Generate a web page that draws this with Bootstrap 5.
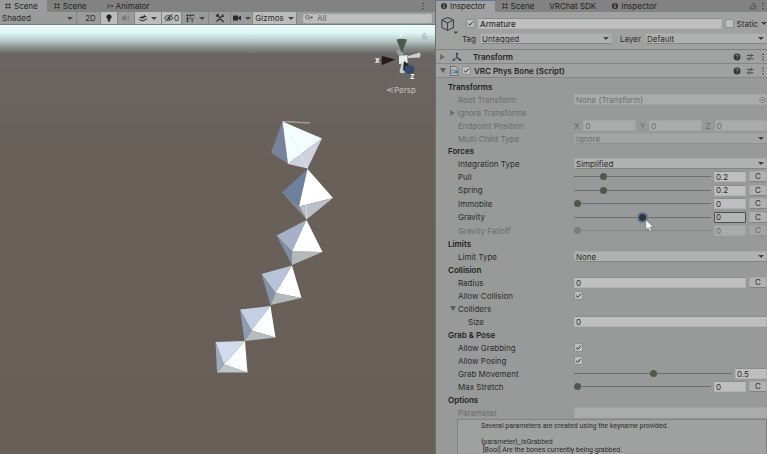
<!DOCTYPE html>
<html lang="en">
<head>
<meta charset="utf-8">
<meta name="viewport" content="width=device-width, initial-scale=1">
<title>Armature - Inspector</title>
<link href="https://cdn.jsdelivr.net/npm/bootstrap@5.3.0/dist/css/bootstrap.min.css" rel="stylesheet">
<style>
  body { font-family: Inter, "Liberation Sans", sans-serif; font-size: 8px; line-height: 12px; color: #2b2c2b; background: #989a99; }
  svg { display: block; flex: none; }
  button, input, select { font: inherit; color: inherit; }
  .editor { display: grid; grid-template-columns: 435fr 332fr; height: 100vh; }
  .pane { min-width: 0; min-height: 0; }
  .i8 { width: 8px; height: 8px; }
  .i10 { width: 10px; height: 10px; }
  .arrow { width: 0; height: 0; border: 3px solid transparent; border-top: 3px solid #444; border-bottom: 0; flex: none; }

  /* tab strips */
  .tabstrip { height: 12px; background: #828282; gap: 2px; }
  .tab { border: 0; background: none; padding: 0 9px 0 4px; gap: 2px; height: 12px; white-space: nowrap; color: #222; }
  .tab.current { background: #9a9c9b; }
  .inspector .tab.current { background: #a0a2a1; box-shadow: inset 0 1px #64799a; }

  /* scene toolbar */
  .toolstrip { height: 13px; background: #9a9b9b; border-bottom: 1px solid #7b7d7d; }
  .tool { border: 0; border-right: 1px solid #858686; background: none; padding: 0; height: 12px; gap: 4px; flex: none; }
  .tool.lit { background: #bbbcbc; }
  .w17 { width: 17px; } .w20 { width: 20px; } .w22 { width: 22px; } .w27 { width: 27px; } .w44 { width: 44px; }
  .shading { width: 77px; padding: 0 3px 0 2px; }
  .searchbox { height: 9px; margin: 0 3px 0 6px; padding: 0 2px; background: #bcbdbd; border-radius: 2px; }
  .searchbox input { background: none; border: 0; outline: 0; padding: 0; height: 9px; min-width: 0; width: 0; }
  .searchbox input::placeholder { color: #666; opacity: 1; }
  .viewport { background: #686059; }

  /* inspector */
  .inspector { border-left: 1px solid #6c6e6d; overflow: hidden; }
  .objhead { background: #a0a2a1; height: 38px; padding: 4px 0 0 5px; gap: 7px; border-bottom: 1px solid #7f8180; }
  .objhead .line { height: 15px; gap: 3px; }
  .objhead .tagline { margin-left: -4px; gap: 0; }
  .component { height: 14px; gap: 3px; background: #a0a2a1; border-bottom: 1px solid #858786; font-weight: 600; color: #252625; padding: 0 0 0 4px; }
  .component .tail { gap: 5px; }
  .box { background: #bebfbe; border: 1px solid #b1b3b2; border-top-color: #8b8d8c; border-radius: 1px; height: 11px; padding: 0 1px; min-width: 0; outline: 0; }
  .objname { font-weight: 500; }
  .pick { appearance: none; background: #b0b2b1 url("data:image/svg+xml,%3Csvg xmlns='http://www.w3.org/2000/svg' width='6' height='3'%3E%3Cpath d='M0 0h6L3 3z' fill='%23444'/%3E%3C/svg%3E") no-repeat right 2px center; border: 1px solid #a6a8a7; border-bottom-color: #838584; border-radius: 2px; height: 11px; padding: 0 1px; line-height: 8px; min-width: 0; }
  .tick { appearance: none; flex: none; width: 9px; height: 9px; margin: 0; background: #bdbebe; border: 1px solid #8d8f8e; border-radius: 1px; }
  .tick:checked { background-image: url("data:image/svg+xml,%3Csvg xmlns='http://www.w3.org/2000/svg' viewBox='0 0 7 7'%3E%3Cpath d='M1 3.6l1.8 1.7L6 1.6' fill='none' stroke='%23333' stroke-width='1'/%3E%3C/svg%3E"); }
  .slim { border: 1px solid #a7a9a8; border-bottom-color: #838584; background: #b0b2b1; width: 18px; height: 11px; line-height: 9px; padding: 0; border-radius: 2px; flex: none; margin-left: 3px; }
  .props { padding-top: 3px; }
  .prop { display: grid; grid-template-columns: 138px 1fr; align-items: center; height: 13px; }
  .prop > label, .prop > .lbl { padding-left: 22px; }
  .prop.tall { height: 14px; }
  .heading { font-size: 8px; font-weight: 600; height: 13px; line-height: 14px; margin: 0; padding-left: 12px; color: #1d1e1d; }
  .heading.tight { height: 12px; line-height: 12px; }
  .prop .fold { padding-left: 14px; gap: 2px; }
  .prop > label.deep { padding-left: 32px; }
  .off { color: #6a6c6b; }
  .off .box { background: #aaacab; border-color: #a3a5a4; }
  .off .pick, .off .slim { background-color: #a3a5a4; border-color: #9fa1a0; border-bottom-color: #909291; }
  .off input, .off select, .off button { color: #6a6c6b; opacity: 1; }
  .tri { border: 3px solid transparent; border-left: 5px solid #6b6d6c; border-right: 0; width: 0; height: 0; flex: none; }
  .tri.open { border: 3px solid transparent; border-top: 5px solid #5b5d5c; border-bottom: 0; }
  .num { width: 32px; flex: none; }
  .active-box { border-color: #4e504f; background: #b4b6b5; }
  .knob { appearance: none; background: none; height: 11px; margin: 0 3px 0 0; min-width: 0; width: 0; flex: 1; }
  .knob::-webkit-slider-runnable-track { height: 1px; background: #6d6f6e; }
  .knob::-webkit-slider-thumb { appearance: none; width: 7px; height: 7px; margin-top: -3px; border-radius: 50%; background: #4c5b49; }
  .off .knob::-webkit-slider-thumb { background: #7c7e7d; }
  .off .knob::-webkit-slider-runnable-track { background: #848685; }
  .knob.held::-webkit-slider-thumb { background: #303532; box-shadow: 0 0 0 2px #64789a; }
  .pointer { position: absolute; left: 71px; top: 7px; width: 9px; height: 13px; z-index: 2; }
  .help { margin-left: 21px; border: 1px solid #808281; background: #9fa1a0; font-family: Roboto, sans-serif; font-size: 7px; line-height: 8px; padding: 2px 0 8px 23px; white-space: pre-line; }
</style>
<script src="https://cdn.jsdelivr.net/npm/bootstrap@5.3.0/dist/js/bootstrap.bundle.min.js"></script>
</head>
<body class="overflow-hidden">
<svg width="0" height="0" class="position-absolute" aria-hidden="true">
  <symbol id="hash" viewBox="0 0 8 8"><path d="M2.5 1v6M5.5 1v6M1 2.5h6M1 5.5h6" stroke="#3c3c3c" stroke-width=".8" fill="none"/></symbol>
  <symbol id="info" viewBox="0 0 8 8"><circle cx="4" cy="4" r="3.1" fill="#333"/><path d="M4 1.8v1M4 3.5v2.7" stroke="#aaa" stroke-width="1"/></symbol>
  <symbol id="help" viewBox="0 0 8 8"><circle cx="4" cy="4" r="3.4" fill="#333"/><path d="M2.8 3.1c0-1.6 2.5-1.5 2.4 0C5.2 3.9 4 3.9 4 4.8M4 5.5v.9" stroke="#aaa" stroke-width=".8" fill="none"/></symbol>
  <symbol id="preset" viewBox="0 0 8 8"><path d="M1 2.5h3M5 2.5h2.5M5 .8v3.4M.8 5.8h2M4 5.8h3.4M3 4.2v3.3" stroke="#3a3a3a" stroke-width=".9" fill="none"/></symbol>
  <symbol id="dots" viewBox="0 0 8 8"><path d="M3.4.8h1.2V2H3.4zM3.4 3.4h1.2v1.2H3.4zM3.4 6h1.2v1.2H3.4z" fill="#3a3a3a"/></symbol>
  <symbol id="lock" viewBox="0 0 8 8"><path d="M1.500 4h5v3h-5zM3 2.500C3 .7 5.700.7 5.700 2.500V4" fill="none" stroke="#4b4b4b" stroke-width=".8"/></symbol>
</svg>

<main class="editor">
  <section class="pane d-flex flex-column" aria-label="Scene view">
    <div class="tabstrip d-flex align-items-center">
      <button class="tab current d-flex align-items-center"><svg class="i8"><use href="#hash"/></svg>Scene</button>
      <button class="tab d-flex align-items-center"><svg class="i8"><use href="#hash"/></svg>Scene</button>
      <button class="tab d-flex align-items-center ms-1"><svg class="i8" viewBox="0 0 8 8"><path d="M1 1.5L3 4 1 6.5M3 4h4M5.6 2.6L7 4 5.6 5.4" fill="none" stroke="#3c3c3c" stroke-width=".9"/></svg>Animator</button>
      <svg class="i8 ms-auto me-2"><use href="#dots"/></svg>
    </div>
    <div class="toolstrip d-flex align-items-center">
      <button class="tool shading d-flex align-items-center justify-content-between">Shaded<span class="arrow"></span></button>
      <button class="tool w20 ms-1">2D</button>
      <button class="tool lit w17 d-flex align-items-center justify-content-center" aria-label="Lighting"><svg class="i8" viewBox="0 0 8 8"><path d="M4 .5a2.400 2.400 0 0 0-1.200 4.600V7.500h2.400V5.100A2.400 2.400 0 0 0 4 .5" fill="#222"/></svg></button>
      <button class="tool w17 d-flex align-items-center justify-content-center" aria-label="Audio"><svg class="i8" viewBox="0 0 8 8"><path d="M0 3h1.500L3.500 1v6L1.500 5H0zM5 2.500v3M6.500 1.500v5" fill="#777" stroke="#777" stroke-width=".7"/></svg></button>
      <button class="tool lit w27 d-flex align-items-center justify-content-center" aria-label="Effects"><svg class="i8" viewBox="0 0 8 8"><path d="M0 3.500l3-1.300 1 .5L5.500.5 6 2l2 .5-2.500 1L4 4.700zM0 5l3.800 1.500L8 4.300v1L3.800 7.600 0 6z" fill="#2b2b2b"/></svg><span class="arrow"></span></button>
      <button class="tool lit w20 d-flex align-items-center justify-content-center gap-0"><svg class="i10" viewBox="0 0 10 10"><path d="M.5 5C2.500 1.800 7 1.800 9 5 7 8 2.500 8 .5 5zM1.500 8.500L8.500 1" fill="none" stroke="#333" stroke-width=".9"/><circle cx="5" cy="5" r="1.500" fill="#333"/></svg>0</button>
      <button class="tool w27 d-flex align-items-center justify-content-center" aria-label="Grid"><svg class="i10" viewBox="0 0 10 10"><path d="M2.500 1v8M5.500 1v3M8.500 1v2M1 2.500h8M1 5.500h4M1 8h3M5.500 4.500L7.200 7 9 4.500M7.200 7v2.500" fill="none" stroke="#333" stroke-width=".8"/></svg><span class="arrow"></span></button>
      <button class="tool w22 d-flex align-items-center justify-content-center" aria-label="Tools"><svg class="i10" viewBox="0 0 10 10"><path d="M1.500 1.500L8.500 9M8.500 1.500L1.500 8.500M.8 3.200h2.500V.8M6.500 3l2.500.5" fill="none" stroke="#303030" stroke-width="1.200"/></svg></button>
      <button class="tool w22 d-flex align-items-center justify-content-center" aria-label="Camera"><svg class="i8" viewBox="0 0 8 8"><path d="M0 1.500h5v5H0zM5.300 3.300L8 1.500v5L5.300 4.700z" fill="#2b2b2b"/></svg><span class="arrow"></span></button>
      <button class="tool lit w44 d-flex align-items-center justify-content-center">Gizmos<span class="arrow"></span></button>
      <label class="searchbox d-flex align-items-center flex-grow-1"><svg class="i8" viewBox="0 0 8 8"><circle cx="2.500" cy="3.200" r="1.800" fill="none" stroke="#555" stroke-width=".8"/><path d="M3.800 4.500L5.500 6.500M5.500 3h2.300L6.700 4.300z" stroke="#555" stroke-width=".6"/></svg><input class="flex-grow-1 ms-1" type="search" placeholder="All" aria-label="Search scene"></label>
    </div>
    <div class="viewport flex-grow-1 overflow-hidden pane">
      <svg class="w-100 h-100" viewBox="0 25 435 429" preserveAspectRatio="xMidYMin slice" role="img" aria-label="Chain of six bones">
        <defs>
          <linearGradient id="sky" x1="0" y1="0" x2="0" y2="1">
            <stop offset="0" stop-color="#ecfcfc"/><stop offset=".28" stop-color="#dcf5f4"/><stop offset=".55" stop-color="#b6c7c6"/><stop offset=".8" stop-color="#878b8a"/><stop offset="1" stop-color="#6b6766"/>
          </linearGradient>
          <linearGradient id="ground" x1="0" y1="0" x2="0" y2="1"><stop offset="0" stop-color="#6b6666"/><stop offset=".3" stop-color="#686059"/><stop offset="1" stop-color="#675f58"/></linearGradient>
        </defs>
        <path d="M0 25h435v429H0z" fill="url(#ground)"/>
        <path d="M0 25h435v29H0z" fill="url(#sky)"/>
        <g>
          <path d="M282.500 121.500L271 152.500 288 164z" fill="#77839a"/><path d="M282.500 121.500L322 138.500 288 164z" fill="#f3fcfe"/><path d="M322 138.500L307.500 168.500 288 164z" fill="#cdd2dc"/>
          <path d="M282.500 121.500L310 123.300M282.500 121.500L310 122.500" stroke="#b9bab8" stroke-width=".6"/><path d="M291 136L307.500 168.500" stroke="#d5eeea" stroke-width=".7"/>
          <path d="M307.500 169L282 192.500 299 206.500z" fill="#6c819c"/><path d="M307.500 169L333 198 299 206.500z" fill="#fff"/><path d="M299 206.500L333 198 306.500 219.500z" fill="#bcbfc7"/><path d="M282 192.500L299 206.500 306.500 219.500z" fill="#858b94"/><path d="M306.500 205v14" stroke="#e0e2e3" stroke-width=".7"/>
          <path d="M306.500 220L276.500 235.500 292 251.500z" fill="#a6b1c7"/><path d="M306.500 220L322.500 252 292 251.500z" fill="#fff"/><path d="M292 251.500L322.500 252 292 265z" fill="#b3b8ba"/><path d="M276.500 235.500L292 251.500 292 265z" fill="#7f8da3"/>
          <path d="M292 265.500L261.500 274 275.500 293z" fill="#b9c3d7"/><path d="M292 265.500L301.500 298 275.500 293z" fill="#fff"/><path d="M275.500 293L301.500 298 270.500 305z" fill="#b1b9ba"/><path d="M261.500 274L275.500 293 270.500 305z" fill="#8491a7"/>
          <path d="M270.500 306L240 309.500 251.500 330.500z" fill="#c6d0e4"/><path d="M270.500 306L275.500 337.500 251.500 330.500z" fill="#fcfdfe"/><path d="M251.500 330.500L275.500 337.500 244.500 341z" fill="#b5bdbf"/><path d="M240 309.500L251.500 330.500 244.500 341z" fill="#8f9bb0"/>
          <path d="M245 341L215.500 342 224 364.500z" fill="#d1dbeb"/><path d="M245 341L247.500 372.500 224 364.500z" fill="#fafcfe"/><path d="M224 364.500L247.500 372.500 217 372.500z" fill="#bdc6cb"/><path d="M215.500 342L224 364.500 217 372.500z" fill="#9faabb"/>
        </g>
        <g font-size="8" font-weight="700" fill="#f0f4f4">
          <path d="M396 51l3-2 5 5-4 4z" fill="#999c9c"/>
          <path d="M396.500 39.500q5-1.500 10.500 0L402.500 52h-1z" fill="#4c5a47"/><path d="M382 56q-1 5 0 9l13.500-5.500z" fill="#241b1b"/>
          <path d="M408 56l12-3.500q1 3 0 5L408 58z" fill="#cbd2d2"/><path d="M401.500 63l-2 9.500q3 1.500 5.500 0L404 63z" fill="#c5cccc"/>
          <path d="M399 56l8.500-1v8l-8.500 1z" fill="#e4eaea"/><path d="M404 61l-1 9 6 4 4-6z" fill="#22262c"/><ellipse cx="409.500" cy="69.500" rx="5" ry="4.500" fill="#384a6c"/>
          <text x="399" y="35">y</text><text x="375" y="63">x</text><text x="410" y="79">z</text>
          <path d="M422 36h5v3.500h-5zM423 36v-2q2-1.500 3 0" fill="#b7c1bf" stroke="#b7c1bf" stroke-width=".5"/>
          <path d="M393 87.500L387 90l6 2.500M387 90h6" fill="none" stroke="#bfbcba" stroke-width=".8"/>
          <text x="394" y="93" font-weight="400" fill="#c5c2c0">Persp</text>
        </g>
      </svg>
    </div>
  </section>

  <section class="pane inspector" aria-label="Inspector">
    <div class="tabstrip d-flex align-items-center">
      <button class="tab current d-flex align-items-center"><svg class="i8"><use href="#info"/></svg>Inspector</button>
      <button class="tab d-flex align-items-center"><svg class="i8"><use href="#hash"/></svg>Scene</button>
      <button class="tab">VRChat SDK</button>
      <button class="tab d-flex align-items-center"><svg class="i8"><use href="#info"/></svg>Inspector</button>
      <svg class="i8 ms-auto"><use href="#lock"/></svg><svg class="i8"><use href="#dots"/></svg>
    </div>

    <header class="objhead d-flex">
      <svg width="18" height="20" viewBox="0 0 18 20"><path d="M6.500 1.500L12.500 4v7.500L6.500 14.500.8 11.500V4zM.8 4l5.700 3 6-3M6.500 7v7.500" fill="none" stroke="#424443" stroke-width="1.100"/><path d="M12.500 15.500h4.500L14.800 18z" fill="#444"/></svg>
      <div class="flex-grow-1 pane">
        <div class="line d-flex align-items-center">
          <input class="tick" type="checkbox" checked aria-label="Active"><input class="box objname flex-grow-1" value="Armature" aria-label="Name">
          <input class="tick" type="checkbox" id="static"><label for="static">Static</label><span class="arrow"></span>
        </div>
        <div class="line tagline d-flex align-items-center">
          <label for="tag" class="me-1">Tag</label><select id="tag" class="pick flex-grow-1"><option>Untagged</option></select>
          <label for="layer" class="ms-2 me-1">Layer</label><select id="layer" class="pick flex-grow-1"><option>Default</option></select>
        </div>
      </div>
    </header>

    <div class="component d-flex align-items-center">
      <span class="tri"></span>
      <svg class="i10 ms-1" viewBox="0 0 10 10"><path d="M5 1v4.500" stroke="#333" stroke-width="1.200"/><path d="M5 5.500L1.500 8" stroke="#4a6285" stroke-width="1.200"/><path d="M5 5.500L8.500 8" stroke="#333" stroke-width="1.200"/><path d="M3.800 2.200L5 .2l1.200 2zM.5 9l.8-2.500L3 8.500zM9.500 9l-.8-2.500L7 8.500z" fill="#333"/></svg>
      <span class="ms-2">Transform</span>
      <div class="tail d-flex ms-auto"><svg class="i8"><use href="#help"/></svg><svg class="i8"><use href="#preset"/></svg><svg class="i8"><use href="#dots"/></svg></div>
    </div>
    <div class="component d-flex align-items-center">
      <span class="tri open"></span>
      <svg class="i10" viewBox="0 0 10 10"><path d="M1.500.5h5L9 3v6.500H1.500z" fill="#b7bcc0" stroke="#555" stroke-width=".7"/><path d="M5 4.200a1.700 1.700 0 1 0 0 2.800M6 4v3.500M7.500 4v3.500M5.500 5h2.700M5.500 6.500h2.700" fill="none" stroke="#3a5c84" stroke-width=".7"/></svg>
      <input class="tick" type="checkbox" checked aria-label="Enabled">
      <span>VRC Phys Bone (Script)</span>
      <div class="tail d-flex ms-auto"><svg class="i8"><use href="#help"/></svg><svg class="i8"><use href="#preset"/></svg><svg class="i8"><use href="#dots"/></svg></div>
    </div>

    <div class="props">
      <h2 class="heading tight">Transforms</h2>
      <div class="prop off"><label for="root">Root Transform</label><div class="d-flex position-relative align-items-center"><input id="root" class="box flex-grow-1" value="None (Transform)" disabled><svg class="i8 position-absolute end-0" viewBox="0 0 8 8"><circle cx="3.500" cy="4" r="2.800" fill="none" stroke="#777" stroke-width=".7"/><circle cx="3.500" cy="4" r="1" fill="#777"/></svg></div></div>
      <div class="prop off"><span class="lbl fold d-flex align-items-center"><span class="tri"></span>Ignore Transforms</span></div>
      <div class="prop off"><span class="lbl">Endpoint Position</span><div class="d-flex align-items-center">
        <label for="px" class="me-1">X</label><input id="px" class="box w-25 flex-grow-1" value="0" disabled>
        <label for="py" class="ms-1 me-1">Y</label><input id="py" class="box w-25 flex-grow-1" value="0" disabled>
        <label for="pz" class="ms-1 me-1">Z</label><input id="pz" class="box w-25 flex-grow-1" value="0" disabled></div></div>
      <div class="prop off"><label for="multi">Multi Child Type</label><select id="multi" class="pick" disabled><option>Ignore</option></select></div>

      <h2 class="heading tight">Forces</h2>
      <div class="prop"><label for="integ">Integration Type</label><select id="integ" class="pick"><option>Simplified</option></select></div>
      <div class="prop"><label for="pull">Pull</label><div class="d-flex align-items-center"><input id="pull" class="knob" type="range" min="0" max="1" step=".01" value=".2"><input class="box num" value="0.2" aria-label="Pull value"><button class="slim">C</button></div></div>
      <div class="prop tall"><label for="spring">Spring</label><div class="d-flex align-items-center"><input id="spring" class="knob" type="range" min="0" max="1" step=".01" value=".2"><input class="box num" value="0.2" aria-label="Spring value"><button class="slim">C</button></div></div>
      <div class="prop"><label for="immobile">Immobile</label><div class="d-flex align-items-center"><input id="immobile" class="knob" type="range" min="0" max="1" step=".01" value="0"><input class="box num" value="0" aria-label="Immobile value"><button class="slim">C</button></div></div>
      <div class="prop tall"><label for="gravity">Gravity</label><div class="d-flex align-items-center position-relative"><input id="gravity" class="knob held" type="range" min="-1" max="1" step=".01" value="0"><input class="box num active-box" value="0" aria-label="Gravity value"><button class="slim">C</button>
        <svg class="pointer" viewBox="0 0 9 13" aria-hidden="true"><path d="M.8.8v10l2.400-2.200 1.500 3.600 1.900-.8L5 8h3.400z" fill="#fff" stroke="#666" stroke-width=".6"/></svg></div></div>
      <div class="prop off"><label for="falloff">Gravity Falloff</label><div class="d-flex align-items-center"><input id="falloff" class="knob" type="range" min="0" max="1" step=".01" value="0" disabled><input class="box num" value="0" aria-label="Gravity falloff value" disabled><button class="slim" disabled>C</button></div></div>

      <h2 class="heading">Limits</h2>
      <div class="prop"><label for="limit">Limit Type</label><select id="limit" class="pick"><option>None</option></select></div>
      <h2 class="heading">Collision</h2>
      <div class="prop"><label for="radius">Radius</label><div class="d-flex align-items-center"><input id="radius" class="box flex-grow-1" value="0"><button class="slim">C</button></div></div>
      <div class="prop"><label for="allowc">Allow Collision</label><input id="allowc" class="tick" type="checkbox" checked></div>
      <div class="prop"><span class="lbl fold d-flex align-items-center"><span class="tri open"></span>Colliders</span></div>
      <div class="prop"><label class="deep" for="size">Size</label><input id="size" class="box" value="0"></div>
      <h2 class="heading">Grab &amp; Pose</h2>
      <div class="prop"><label for="allowg">Allow Grabbing</label><input id="allowg" class="tick" type="checkbox" checked></div>
      <div class="prop"><label for="allowp">Allow Posing</label><input id="allowp" class="tick" type="checkbox" checked></div>
      <div class="prop"><label for="grab">Grab Movement</label><div class="d-flex align-items-center"><input id="grab" class="knob" type="range" min="0" max="1" step=".01" value=".5"><input class="box num" value="0.5" aria-label="Grab movement value"></div></div>
      <div class="prop"><label for="stretch">Max Stretch</label><div class="d-flex align-items-center"><input id="stretch" class="knob" type="range" min="0" max="1" step=".01" value="0"><input class="box num" value="0" aria-label="Max stretch value"><button class="slim">C</button></div></div>
      <h2 class="heading">Options</h2>
      <div class="prop off"><label for="param">Parameter</label><input id="param" class="box" disabled></div>
      <div class="help">Several parameters are created using the keyname provided.

        {parameter}_IsGrabbed
        &nbsp;[Bool] Are the bones currently being grabbed.</div>
    </div>
  </section>
</main>
</body>
</html>
